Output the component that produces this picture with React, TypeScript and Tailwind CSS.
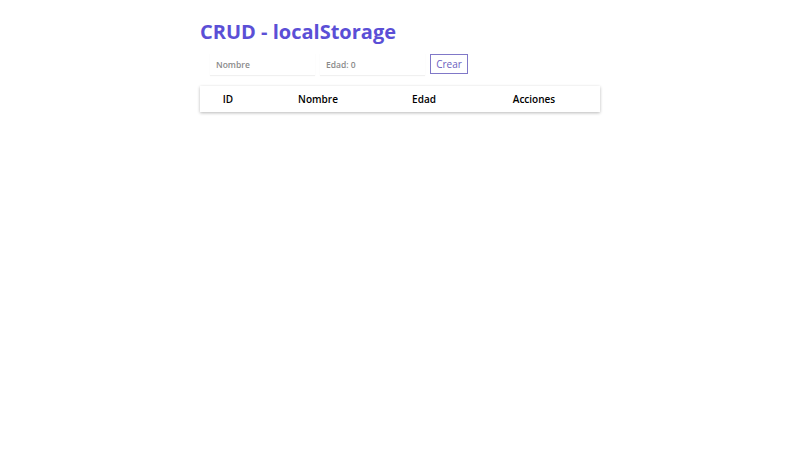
export default function App() {
  return (
    <div className="min-h-[450px] bg-white font-['Open_Sans',sans-serif]">
      <div className="mx-auto w-[400px] pt-[17px]">
        <h1 className="text-[20px] font-bold leading-[30px] text-[#5b4fd6]">CRUD - localStorage</h1>
        <form className="mt-[6px] flex items-center pl-[10px]" onSubmit={(e) => e.preventDefault()}>
          <input
            placeholder="Nombre"
            className="h-[22px] w-[105px] bg-white px-[6px] text-[8.5px] font-semibold text-gray-600 shadow-[0_1px_1px_rgba(0,0,0,0.06)] outline-none placeholder:text-[#8a8a8a]"
          />
          <input
            placeholder="Edad: 0"
            className="ml-[5px] h-[22px] w-[105px] bg-white px-[6px] text-[8.5px] font-semibold text-gray-600 shadow-[0_1px_1px_rgba(0,0,0,0.06)] outline-none placeholder:text-[#8a8a8a]"
          />
          <button
            type="submit"
            className="ml-[5px] h-[20px] w-[38px] border border-[#8078c8] bg-white text-[10px] leading-none text-[#6a60c0]"
          >
            Crear
          </button>
        </form>
        <div className="mt-[11px] flex h-[26px] items-center bg-white text-[10px] font-semibold text-black shadow-[0_1px_3px_rgba(0,0,0,0.28)]">
          <div className="w-[56px] text-center">ID</div>
          <div className="w-[124px] text-center">Nombre</div>
          <div className="w-[88px] text-center">Edad</div>
          <div className="w-[132px] text-center">Acciones</div>
        </div>
      </div>
    </div>
  )
}
